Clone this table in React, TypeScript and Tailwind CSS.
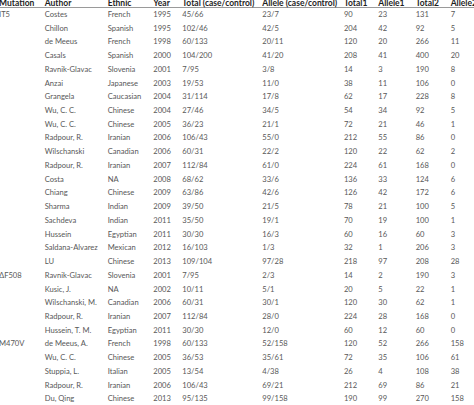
import React from "react";

type Row = [string, string, string, string, string, string, string, string, string, string];

const rows: Row[] = [
  ["IT5", "Costes", "French", "1995", "45/66", "23/7", "90", "23", "131", "7"],
  ["", "Chillon", "Spanish", "1995", "102/46", "42/5", "204", "42", "92", "5"],
  ["", "de Meeus", "French", "1998", "60/133", "20/11", "120", "20", "266", "11"],
  ["", "Casals", "Spanish", "2000", "104/200", "41/20", "208", "41", "400", "20"],
  ["", "Ravnik-Glavac", "Slovenia", "2001", "7/95", "3/8", "14", "3", "190", "8"],
  ["", "Anzai", "Japanese", "2003", "19/53", "11/0", "38", "11", "106", "0"],
  ["", "Grangela", "Caucasian", "2004", "31/114", "17/8", "62", "17", "228", "8"],
  ["", "Wu, C. C.", "Chinese", "2004", "27/46", "34/5", "54", "34", "92", "5"],
  ["", "Wu, C. C.", "Chinese", "2005", "36/23", "21/1", "72", "21", "46", "1"],
  ["", "Radpour, R.", "Iranian", "2006", "106/43", "55/0", "212", "55", "86", "0"],
  ["", "Wilschanski", "Canadian", "2006", "60/31", "22/2", "120", "22", "62", "2"],
  ["", "Radpour, R.", "Iranian", "2007", "112/84", "61/0", "224", "61", "168", "0"],
  ["", "Costa", "NA", "2008", "68/62", "33/6", "136", "33", "124", "6"],
  ["", "Chiang", "Chinese", "2009", "63/86", "42/6", "126", "42", "172", "6"],
  ["", "Sharma", "Indian", "2009", "39/50", "21/5", "78", "21", "100", "5"],
  ["", "Sachdeva", "Indian", "2011", "35/50", "19/1", "70", "19", "100", "1"],
  ["", "Hussein", "Egyptian", "2011", "30/30", "16/3", "60", "16", "60", "3"],
  ["", "Saldana-Alvarez", "Mexican", "2012", "16/103", "1/3", "32", "1", "206", "3"],
  ["", "LU", "Chinese", "2013", "109/104", "97/28", "218", "97", "208", "28"],
  ["\u0394F508", "Ravnik-Glavac", "Slovenia", "2001", "7/95", "2/3", "14", "2", "190", "3"],
  ["", "Kusic, J.", "NA", "2002", "10/11", "5/1", "20", "5", "22", "1"],
  ["", "Wilschanski, M.", "Canadian", "2006", "60/31", "30/1", "120", "30", "62", "1"],
  ["", "Radpour, R.", "Iranian", "2007", "112/84", "28/0", "224", "28", "168", "0"],
  ["", "Hussein, T. M.", "Egyptian", "2011", "30/30", "12/0", "60", "12", "60", "0"],
  ["M470V", "de Meeus, A.", "French", "1998", "60/133", "52/158", "120", "52", "266", "158"],
  ["", "Wu, C. C.", "Chinese", "2005", "36/53", "35/61", "72", "35", "106", "61"],
  ["", "Stuppia, L.", "Italian", "2005", "13/54", "4/38", "26", "4", "108", "38"],
  ["", "Radpour, R.", "Iranian", "2006", "106/43", "69/21", "212", "69", "86", "21"],
  ["", "Du, Qing", "Chinese", "2013", "95/135", "99/158", "190", "99", "270", "158"],
];

const header: Row = [
  "Mutation",
  "Author",
  "Ethnic",
  "Year",
  "Total (case/control)",
  "Allele (case/control)",
  "Total1",
  "Allele1",
  "Total2",
  "Allele2",
];

const cols =
  "grid grid-cols-[45.7px_63px_45.6px_29px_80px_81.7px_34.3px_37.4px_35px_60px]";

export default function App() {
  return (
    <div className="w-[474px] h-[405px] overflow-hidden bg-white">
      <div
        className="-ml-[1px] w-[520px] whitespace-nowrap text-[7.6px] text-[#585858]"
        style={{ fontFamily: "Lato, 'Open Sans', sans-serif" }}
      >
        <div
          className={`${cols} h-[7.5px] items-start border-b border-[#9a9a9a] font-bold text-[#1e1e1e] text-[8.5px]`}
        >
          {header.map((h, i) => (
            <div key={i} className="leading-[7px]">
              {h}
            </div>
          ))}
        </div>
        <div className="pt-[0.3px]">
          {rows.map((r, ri) => (
            <div key={ri} className={`${cols} h-[13.74px] items-center`}>
              {r.map((c, ci) => (
                <div key={ci} className="leading-none">
                  {c}
                </div>
              ))}
            </div>
          ))}
        </div>
      </div>
    </div>
  );
}
